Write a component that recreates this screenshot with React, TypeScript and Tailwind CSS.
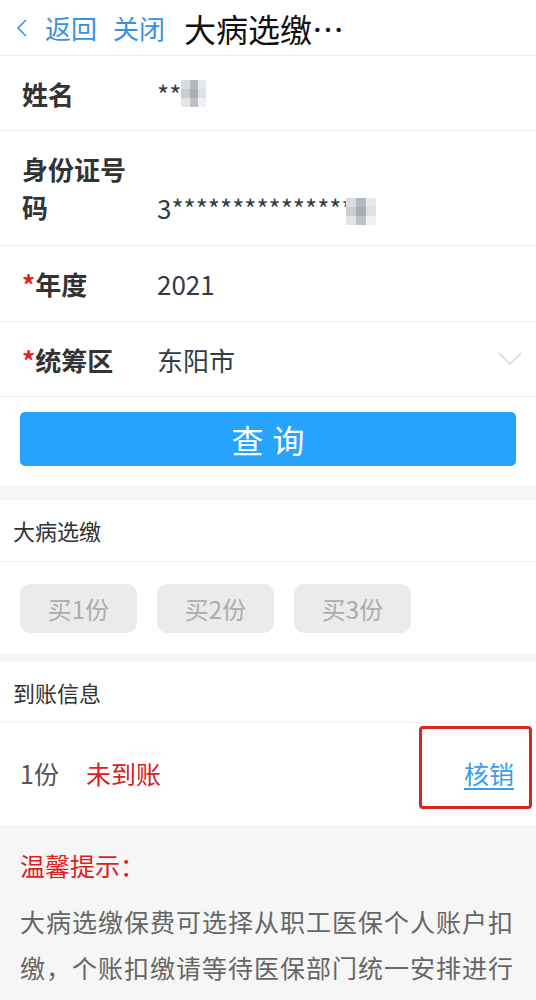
import React from "react";

const F = "font-['Noto_Sans_CJK_SC','Noto_Sans',sans-serif]";

function Blur({ w = 25, h = 27 }: { w?: number; h?: number }) {
  return (
    <span
      className="inline-grid grid-cols-3 grid-rows-3 align-middle"
      style={{ width: w, height: h }}
    >
      <span className="bg-[#d9dcdf]" />
      <span className="bg-[#b4b9be]" />
      <span className="bg-[#e6e8ea]" />
      <span className="bg-[#c9cdd1]" />
      <span className="bg-[#a9aeb4]" />
      <span className="bg-[#dfe2e4]" />
      <span className="bg-[#e3e5e7]" />
      <span className="bg-[#bfc3c8]" />
      <span className="bg-[#f0f1f2]" />
    </span>
  );
}

export default function App() {
  return (
    <div className={`${F} w-[536px] h-[1000px] overflow-hidden bg-[#f6f6f6]`}>
      {/* header */}
      <div className="flex items-center h-[56px] bg-white border-b border-[#eeeeee]">
        <svg width="14" height="20" viewBox="0 0 14 20" className="ml-[15px]">
          <path d="M11 2 L3 10 L11 18" fill="none" stroke="#3b90e0" strokeWidth="1.6" />
        </svg>
        <span className="ml-[16px] text-[26px] leading-none text-[#3b90e0]">返回</span>
        <span className="ml-[16px] text-[26px] leading-none text-[#3b90e0]">关闭</span>
        <span className="ml-[19px] text-[32px] leading-none text-[#111]">
          大病选缴<span className="tracking-[2px]">…</span>
        </span>
      </div>

      {/* form */}
      <div className="bg-white">
        <div className="flex items-center h-[75px] border-b border-[#eeeeee] pl-[22px]">
          <div className="w-[110px] shrink-0 text-[26px] font-bold text-[#333]">姓名</div>
          <div className="ml-[25px] flex items-center text-[26px] text-[#333c47]">
            <span>**</span>
            <Blur w={25} h={27} />
          </div>
        </div>
        <div className="flex items-end py-[19px] border-b border-[#eeeeee] pl-[22px]">
          <div className="w-[110px] shrink-0 text-[26px] leading-[38px] font-bold text-[#333]">
            身份证号码
          </div>
          <div className="ml-[25px] flex items-center h-[38px] text-[26px] text-[#333c47]">
            <span>3***************</span>
            <span className="-ml-[8px]">
              <Blur w={30} h={27} />
            </span>
          </div>
        </div>
        <div className="flex items-center h-[76px] border-b border-[#eeeeee] pl-[22px]">
          <div className="w-[110px] shrink-0 text-[26px] font-bold text-[#333]">
            <span className="text-[#e4201b]">*</span>年度
          </div>
          <div className="ml-[25px] text-[26px] text-[#333c47]">2021</div>
        </div>
        <div className="flex items-center h-[75px] border-b border-[#eeeeee] pl-[22px] pr-[14px]">
          <div className="w-[110px] shrink-0 text-[26px] font-bold text-[#333]">
            <span className="text-[#e4201b]">*</span>统筹区
          </div>
          <div className="ml-[25px] flex-1 text-[26px] text-[#333c47]">东阳市</div>
          <svg width="24" height="14" viewBox="0 0 24 14">
            <path d="M1 1 L12 12 L23 1" fill="none" stroke="#d2d2d2" strokeWidth="1.3" />
          </svg>
        </div>
        <div className="pt-[15px] pb-[20px] px-[20px]">
          <div className="h-[54px] rounded-[5px] bg-[#26a3fd] flex items-center justify-center text-white text-[32px] tracking-[9px] pl-[9px]">
            查询
          </div>
        </div>
      </div>

      <div className="h-[14px]" />

      {/* 大病选缴 */}
      <div className="bg-white">
        <div className="h-[62px] flex items-center pl-[13px] border-b border-[#f0f0f0] text-[22px] text-[#333]">
          大病选缴
        </div>
        <div className="flex gap-[20px] pl-[20px] pt-[22px] pb-[21px]">
          {["买1份", "买2份", "买3份"].map((t) => (
            <div
              key={t}
              className="w-[117px] h-[49px] rounded-[10px] bg-[#ebebeb] flex items-center justify-center text-[24px] text-[#acacac]"
            >
              {t}
            </div>
          ))}
        </div>
      </div>

      <div className="h-[8px]" />

      {/* 到账信息 */}
      <div className="bg-white">
        <div className="h-[61px] flex items-center pl-[13px] border-b border-[#f0f0f0] text-[22px] text-[#333]">
          到账信息
        </div>
        <div className="relative h-[102px] flex items-center pl-[20px] pr-[22px]">
          <span className="text-[25px] text-[#555]">1份</span>
          <span className="ml-[27px] text-[25px] text-[#d9201d]">未到账</span>
          <span className="ml-auto text-[25px] text-[#3a9de6] underline underline-offset-[4px] decoration-[1.5px]">
            核销
          </span>
          <div className="absolute left-[419px] top-[3px] w-[113px] h-[83px] border-[3.5px] border-[#dc2323] rounded-[4px]" />
        </div>
      </div>

      {/* tips */}
      <div className="px-[20px] pt-[22px]">
        <div className="text-[25px] leading-[36px] text-[#de1e1e]">温馨提示：</div>
        <div className="mt-[15px] text-[25px] leading-[46px] tracking-[1px] text-[#666]">
          大病选缴保费可选择从职工医保个人账户扣缴，个账扣缴请等待医保部门统一安排进行
        </div>
      </div>
    </div>
  );
}
